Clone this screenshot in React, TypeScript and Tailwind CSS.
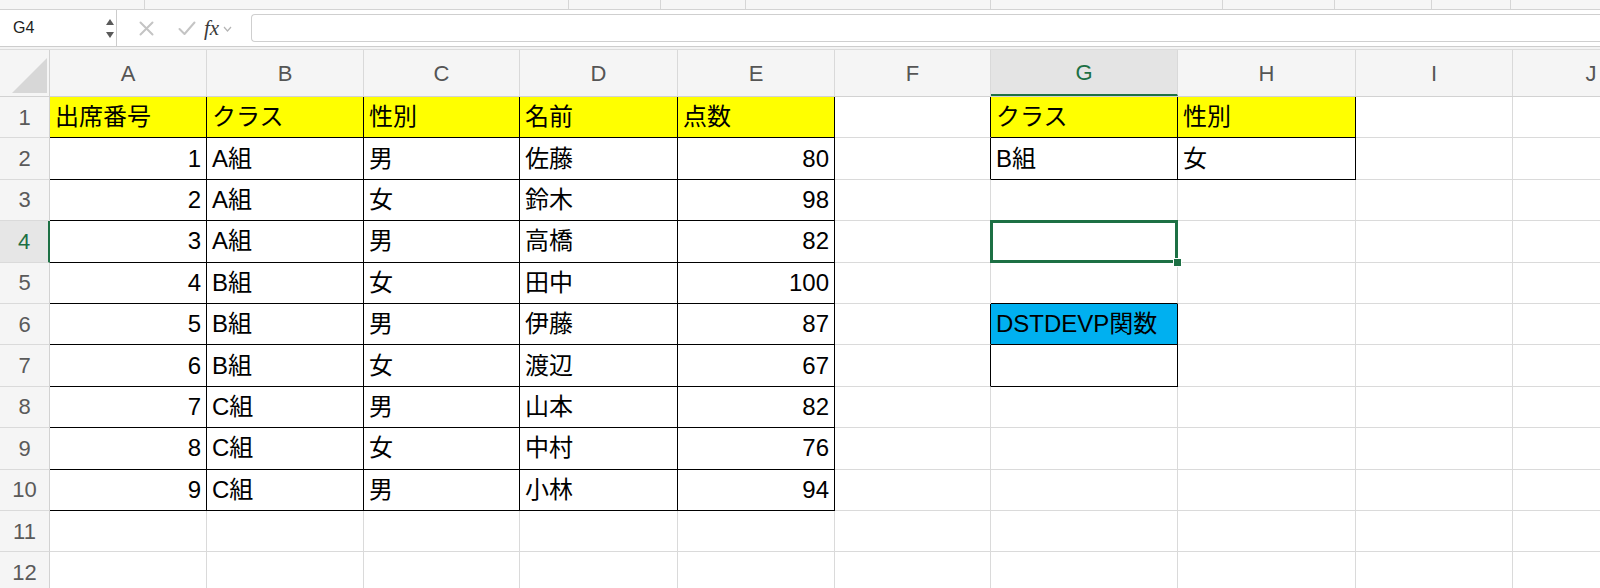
import React from "react";

const COLS = [157, 157, 156, 158, 157, 156, 187, 178, 157, 157];
const LETTERS = ["A", "B", "C", "D", "E", "F", "G", "H", "I", "J"];

type Cell = { t: string; right?: boolean };

const DATA: (string | number)[][] = [
  [1, "A組", "男", "佐藤", 80],
  [2, "A組", "女", "鈴木", 98],
  [3, "A組", "男", "高橋", 82],
  [4, "B組", "女", "田中", 100],
  [5, "B組", "男", "伊藤", 87],
  [6, "B組", "女", "渡辺", 67],
  [7, "C組", "男", "山本", 82],
  [8, "C組", "女", "中村", 76],
  [9, "C組", "男", "小林", 94],
];

function getCell(r: number, c: number): Cell {
  if (r === 1) {
    const h = ["出席番号", "クラス", "性別", "名前", "点数", "", "クラス", "性別"];
    return { t: h[c] ?? "" };
  }
  if (r >= 2 && r <= 10 && c <= 4) {
    const v = DATA[r - 2][c];
    return { t: String(v), right: typeof v === "number" };
  }
  if (r === 2 && c === 6) return { t: "B組" };
  if (r === 2 && c === 7) return { t: "女" };
  if (r === 6 && c === 6) return { t: "DSTDEVP関数" };
  return { t: "" };
}

function inBox(r: number, c: number) {
  return (
    (r >= 1 && r <= 10 && c >= 0 && c <= 4) ||
    (r >= 1 && r <= 2 && c >= 6 && c <= 7) ||
    (r >= 6 && r <= 7 && c === 6)
  );
}

function fill(r: number, c: number) {
  if (r === 1 && (c <= 4 || c === 6 || c === 7)) return "bg-[#ffff00]";
  if (r === 6 && c === 6) return "bg-[#00b0f0]";
  return "bg-white";
}

const TOP_DIVS = [145, 424, 92, 85, 245, 232, 112, 97, 79];

export default function App() {
  const rows = Array.from({ length: 12 }, (_, i) => i + 1);
  const font = { fontFamily: '"Liberation Sans", "Noto Sans CJK JP", sans-serif' };
  return (
    <div className="w-[1600px] h-[588px] overflow-hidden bg-white select-none">
      {/* top ribbon remnant */}
      <div className="flex h-[10px] bg-[#f6f6f6] border-b border-[#d3d3d3]">
        {TOP_DIVS.map((w, i) => (
          <div key={i} className="h-full shrink-0 border-r border-[#d6d6d6]" style={{ width: w }} />
        ))}
        <div className="flex-1" />
      </div>

      {/* formula bar */}
      <div className="flex h-[37px] bg-white border-b border-[#cdcdcd]">
        <div className="relative w-[117px] shrink-0 h-full border-r border-[#cccccc] flex items-center">
          <span
            className="pl-[13px] text-[16px] text-[#222]"
            style={{ fontFamily: '"Liberation Sans", Arial, sans-serif' }}
          >
            G4
          </span>
          <svg className="absolute left-[105px] top-[8px]" width="10" height="22" viewBox="0 0 10 22">
            <path d="M5 1 L9 7 L1 7 Z" fill="#5a5a5a" />
            <path d="M5 20 L9 14 L1 14 Z" fill="#5a5a5a" />
          </svg>
        </div>
        <div className="w-[134px] shrink-0 h-full flex items-center">
          <svg className="ml-[22px]" width="15" height="15" viewBox="0 0 15 15">
            <path d="M1.5 1.5 L13.5 13.5 M13.5 1.5 L1.5 13.5" stroke="#c4c4c4" strokeWidth="2" strokeLinecap="round" />
          </svg>
          <svg className="ml-[24px]" width="18" height="15" viewBox="0 0 18 15">
            <path d="M1.5 8 L6.5 13 L16.5 1.5" stroke="#c4c4c4" strokeWidth="2" fill="none" strokeLinecap="round" strokeLinejoin="round" />
          </svg>
          <span
            className="ml-[8px] text-[21px] italic text-[#3a3a3a] leading-none"
            style={{ fontFamily: '"Liberation Serif", "Times New Roman", serif' }}
          >
            fx
          </span>
          <svg className="ml-[4px] mt-[2px]" width="9" height="6" viewBox="0 0 9 6">
            <path d="M1 1 L4.5 5 L8 1" stroke="#b5b5b5" strokeWidth="1.2" fill="none" />
          </svg>
        </div>
        <div className="flex-1 h-full py-[4px]">
          <div className="h-full border border-[#cfcfcf] border-r-0 rounded-l-[4px] bg-white" />
        </div>
      </div>

      {/* separator */}
      <div className="h-[3px] bg-[#f3f3f3] border-b border-[#dcdcdc]" />

      {/* column headers */}
      <div className="flex h-[47px] bg-[#f5f5f5] border-b border-[#d2d2d2]">
        <div className="w-[50px] shrink-0 h-full border-r border-[#d2d2d2] relative">
          <svg className="absolute left-0 top-0" width="50" height="46" viewBox="0 0 50 46">
            <path d="M47 8 L47 43 L12 43 Z" fill="#d7d7d7" />
          </svg>
        </div>
        {LETTERS.map((L, i) => {
          const sel = i === 6;
          return (
            <div
              key={L}
              className={
                "h-full shrink-0 flex items-center justify-center text-[22px] border-r border-[#d9d9d9] " +
                (sel ? "bg-[#e4e4e4] text-[#1d7044] border-b-2 border-b-[#1d7044]" : "text-[#555]")
              }
              style={{
                width: COLS[i],
                fontFamily: '"Liberation Sans", Arial, sans-serif',
              }}
            >
              {L}
            </div>
          );
        })}
      </div>

      {/* grid rows */}
      {rows.map((r) => (
        <div key={r} className="flex h-[41.4px]">
          <div
            className={
              "w-[50px] shrink-0 h-full flex items-center justify-center text-[22px] border-b border-[#dadada] " +
              (r === 4
                ? "bg-[#e6e6e6] text-[#1d7044] border-r-2 border-r-[#1d7044]"
                : "bg-[#f5f5f5] text-[#5a5a5a] border-r border-r-[#d2d2d2]")
            }
            style={{ fontFamily: '"Liberation Sans", Arial, sans-serif' }}
          >
            {r}
          </div>
          {LETTERS.map((L, c) => {
            const cell = getCell(r, c);
            const rb = inBox(r, c) || inBox(r, c + 1);
            const bb = inBox(r, c) || inBox(r + 1, c);
            const sel = r === 4 && c === 6;
            return (
              <div
                key={L}
                className={
                  "relative shrink-0 h-full flex items-center overflow-visible whitespace-nowrap text-[24px] text-black leading-none border-r border-b " +
                  (sel ? "z-10 " : "") +
                  fill(r, c) +
                  " " +
                  (rb ? "border-r-black " : "border-r-[#dadada] ") +
                  (bb ? "border-b-black " : "border-b-[#dadada] ") +
                  (cell.right ? "justify-end pr-[5px]" : "justify-start pl-[5px]")
                }
                style={{ width: COLS[c], ...font }}
              >
                {cell.t}
                {sel && (
                  <>
                    <div className="absolute -left-[1px] -top-[1px] -right-[1px] -bottom-[1px] z-20 border-[3px] border-[#1d7044] pointer-events-none" />
                    <div className="absolute -right-[5px] -bottom-[5px] z-30 w-[9px] h-[9px] bg-[#1d7044] border border-white" />
                  </>
                )}
              </div>
            );
          })}
        </div>
      ))}
    </div>
  );
}
